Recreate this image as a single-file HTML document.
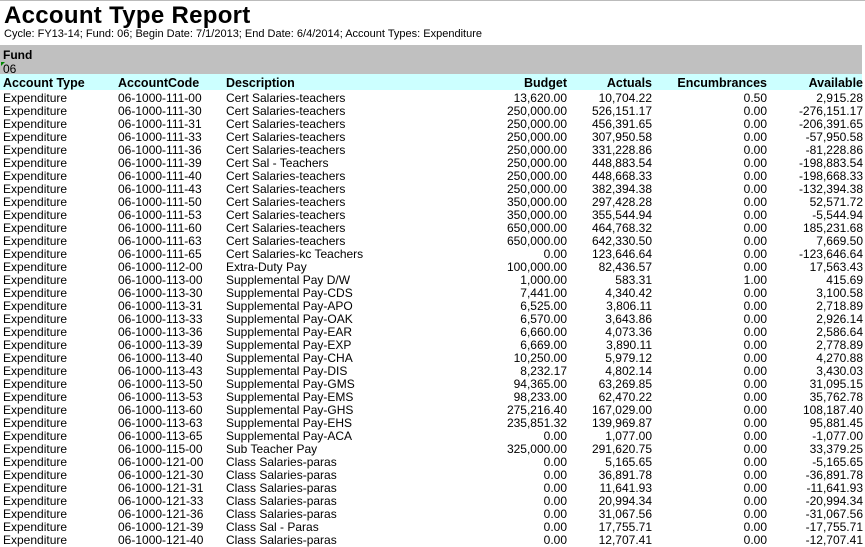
<!DOCTYPE html><html><head><style>
body{margin:0;width:865px;height:546px;overflow:hidden;background:#fff;font-family:"Liberation Sans",Tahoma,sans-serif;color:#000;position:relative}
.top{position:absolute;left:0;top:0;width:865px;height:1px;background:#bbb}
.t{position:absolute;left:4px;top:2px;font-size:24px;font-weight:bold;letter-spacing:0.3px}
.s{position:absolute;left:4px;top:28px;font-size:11px}
.g{position:absolute;left:0;top:45px;width:862px;height:29px;background:#c0c0c0}
.f{position:absolute;left:3px;top:48px;font-size:12px;font-weight:bold}
.z{position:absolute;left:3px;top:62px;font-size:12px}
.tri{position:absolute;left:1px;top:62px;width:0;height:0;border-top:4px solid #080;border-right:4px solid transparent}
.h{position:absolute;left:0;top:74px;width:862px;height:16px;background:#ccffff}
.r{position:absolute;left:0;width:865px;height:13px;font-size:12px;line-height:13px}
.r span{position:absolute;white-space:nowrap}
.hd{font-weight:bold;font-size:12.5px}
.a{left:3px}.b{left:118px}.c{left:226px}
.d{right:298px;text-align:right}.e{right:213px}.fe{right:98px}.gv{right:2px}
</style></head><body>
<div class="top"></div>
<div class="t">Account Type Report</div>
<div class="s">Cycle: FY13-14; Fund: 06; Begin Date: 7/1/2013; End Date: 6/4/2014; Account Types: Expenditure</div>
<div class="g"></div><div class="f">Fund</div><div class="tri"></div><div class="z">06</div>
<div class="h"></div>
<div class="r hd" style="top:77px"><span class="a">Account Type</span><span class="b">AccountCode</span><span class="c">Description</span><span class="d">Budget</span><span class="e">Actuals</span><span class="fe">Encumbrances</span><span class="gv">Available</span></div>
<div id="rows"></div>
<script>
var d=[
["06-1000-111-00","Cert Salaries-teachers","13,620.00","10,704.22","0.50","2,915.28"],
["06-1000-111-30","Cert Salaries-teachers","250,000.00","526,151.17","0.00","-276,151.17"],
["06-1000-111-31","Cert Salaries-teachers","250,000.00","456,391.65","0.00","-206,391.65"],
["06-1000-111-33","Cert Salaries-teachers","250,000.00","307,950.58","0.00","-57,950.58"],
["06-1000-111-36","Cert Salaries-teachers","250,000.00","331,228.86","0.00","-81,228.86"],
["06-1000-111-39","Cert Sal - Teachers","250,000.00","448,883.54","0.00","-198,883.54"],
["06-1000-111-40","Cert Salaries-teachers","250,000.00","448,668.33","0.00","-198,668.33"],
["06-1000-111-43","Cert Salaries-teachers","250,000.00","382,394.38","0.00","-132,394.38"],
["06-1000-111-50","Cert Salaries-teachers","350,000.00","297,428.28","0.00","52,571.72"],
["06-1000-111-53","Cert Salaries-teachers","350,000.00","355,544.94","0.00","-5,544.94"],
["06-1000-111-60","Cert Salaries-teachers","650,000.00","464,768.32","0.00","185,231.68"],
["06-1000-111-63","Cert Salaries-teachers","650,000.00","642,330.50","0.00","7,669.50"],
["06-1000-111-65","Cert Salaries-kc Teachers","0.00","123,646.64","0.00","-123,646.64"],
["06-1000-112-00","Extra-Duty Pay","100,000.00","82,436.57","0.00","17,563.43"],
["06-1000-113-00","Supplemental Pay D/W","1,000.00","583.31","1.00","415.69"],
["06-1000-113-30","Supplemental Pay-CDS","7,441.00","4,340.42","0.00","3,100.58"],
["06-1000-113-31","Supplemental Pay-APO","6,525.00","3,806.11","0.00","2,718.89"],
["06-1000-113-33","Supplemental Pay-OAK","6,570.00","3,643.86","0.00","2,926.14"],
["06-1000-113-36","Supplemental Pay-EAR","6,660.00","4,073.36","0.00","2,586.64"],
["06-1000-113-39","Supplemental Pay-EXP","6,669.00","3,890.11","0.00","2,778.89"],
["06-1000-113-40","Supplemental Pay-CHA","10,250.00","5,979.12","0.00","4,270.88"],
["06-1000-113-43","Supplemental Pay-DIS","8,232.17","4,802.14","0.00","3,430.03"],
["06-1000-113-50","Supplemental Pay-GMS","94,365.00","63,269.85","0.00","31,095.15"],
["06-1000-113-53","Supplemental Pay-EMS","98,233.00","62,470.22","0.00","35,762.78"],
["06-1000-113-60","Supplemental Pay-GHS","275,216.40","167,029.00","0.00","108,187.40"],
["06-1000-113-63","Supplemental Pay-EHS","235,851.32","139,969.87","0.00","95,881.45"],
["06-1000-113-65","Supplemental Pay-ACA","0.00","1,077.00","0.00","-1,077.00"],
["06-1000-115-00","Sub Teacher Pay","325,000.00","291,620.75","0.00","33,379.25"],
["06-1000-121-00","Class Salaries-paras","0.00","5,165.65","0.00","-5,165.65"],
["06-1000-121-30","Class Salaries-paras","0.00","36,891.78","0.00","-36,891.78"],
["06-1000-121-31","Class Salaries-paras","0.00","11,641.93","0.00","-11,641.93"],
["06-1000-121-33","Class Salaries-paras","0.00","20,994.34","0.00","-20,994.34"],
["06-1000-121-36","Class Salaries-paras","0.00","31,067.56","0.00","-31,067.56"],
["06-1000-121-39","Class Sal - Paras","0.00","17,755.71","0.00","-17,755.71"],
["06-1000-121-40","Class Salaries-paras","0.00","12,707.41","0.00","-12,707.41"]];
var h="";for(var i=0;i<d.length;i++){var r=d[i];h+='<div class="r" style="top:'+(92+i*13)+'px"><span class="a">Expenditure</span><span class="b">'+r[0]+'</span><span class="c">'+r[1]+'</span><span class="d">'+r[2]+'</span><span class="e">'+r[3]+'</span><span class="fe">'+r[4]+'</span><span class="gv">'+r[5]+'</span></div>';}
document.getElementById("rows").innerHTML=h;
</script>
</body></html>
